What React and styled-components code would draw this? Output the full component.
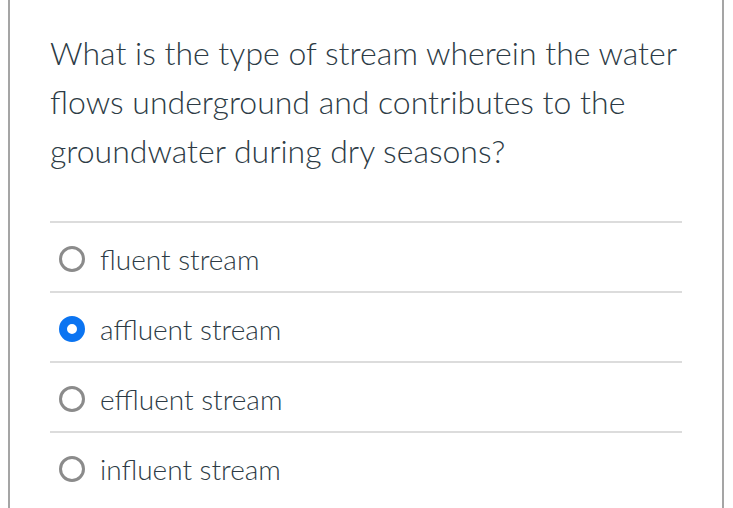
import styled, { createGlobalStyle } from 'styled-components';

const GlobalStyle = createGlobalStyle`
    html, body {
        margin: 0;
        padding: 0;
        background: #fff;
    }
    body {
        font-family: Lato, "Noto Sans", sans-serif;
        color: #2d3b45;
    }
`;

const Page = styled.div`
    padding: 0 9px 0 8px;
    height: 508px;
    overflow: hidden;
`;

const Card = styled.div`
    border-left: 2px solid #a5a5a5;
    border-right: 2px solid #a5a5a5;
    padding: 28px 40px 0 40px;
    min-height: 508px;
`;

const Question = styled.div`
    font-size: 32px;
    line-height: 49px;
    font-weight: 300;
    margin-bottom: 46px;
`;

const Answers = styled.div`
    display: flex;
    flex-direction: column;
`;

const Answer = styled.label`
    display: flex;
    align-items: center;
    gap: 15px;
    padding: 3px 0 0 9px;
    box-sizing: border-box;
    border-top: 2px solid #dcdcdc;
    height: 70px;
    font-size: 28px;
    font-weight: 300;
`;

const Radio = styled.span`
    width: 26px;
    height: 26px;
    box-sizing: border-box;
    border-radius: 50%;
    border: ${(p) => (p.$checked ? '8px solid #0b74f1' : '3px solid #8b8b8b')};
    background: #fff;
    flex: none;
`;

const answers = [
    { id: 'a', text: 'fluent stream' },
    { id: 'b', text: 'affluent stream', checked: true },
    { id: 'c', text: 'effluent stream' },
    { id: 'd', text: 'influent stream' },
];

const App = () => {
    return (
        <>
            <GlobalStyle />
            <Page>
                <Card>
                    <Question>
                        What is the type of stream wherein the water flows underground and contributes to the
                        groundwater during dry seasons?
                    </Question>
                    <Answers>
                        {answers.map((a) => (
                            <Answer key={a.id}>
                                <Radio $checked={a.checked} />
                                {a.text}
                            </Answer>
                        ))}
                    </Answers>
                </Card>
            </Page>
        </>
    );
};

export default App;
